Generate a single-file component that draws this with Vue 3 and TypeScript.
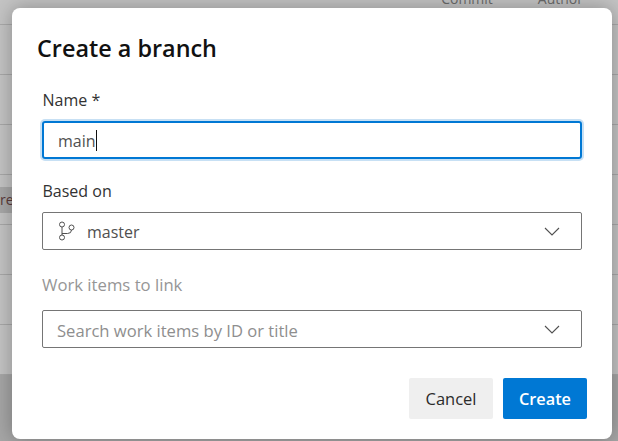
<script setup lang="ts">
const rows: number[] = [0, 1, 2, 3, 4, 5, 6];
</script>

<template>
  <div class="page">
    <div class="backdrop">
      <div class="head"><span>Commit</span><span>Author</span></div>
      <div v-for="r in rows" :key="r" class="row">
        <span v-if="r === 3" class="tag">re</span>
      </div>
    </div>
    <div class="dialog">
      <h1 class="title">Create a branch</h1>
      <div class="form">
        <div class="field">
          <label class="label">Name *</label>
          <div class="box focused"><span class="value">main</span><span class="caret"></span></div>
        </div>
        <div class="field">
          <label class="label">Based on</label>
          <div class="box">
            <svg class="branch" width="18" height="20" viewBox="0 0 18 20" fill="none" stroke="#505050" stroke-width="1">
              <circle cx="4" cy="3.5" r="2.5" />
              <circle cx="4" cy="16.5" r="2.5" />
              <circle cx="13.5" cy="6.5" r="2.5" />
              <path d="M4 6v8M4 12.5h5.5q4 0 4-3.5" />
            </svg>
            <span class="value">master</span>
            <svg class="chev" width="16" height="9" viewBox="0 0 16 9" fill="none" stroke="#505050" stroke-width="1.1"><path d="M1 1l7 7 7-7" /></svg>
          </div>
        </div>
        <div class="field links">
          <label class="label muted">Work items to link</label>
          <div class="box">
            <span class="value placeholder">Search work items by ID or title</span>
            <svg class="chev" width="16" height="9" viewBox="0 0 16 9" fill="none" stroke="#505050" stroke-width="1.1"><path d="M1 1l7 7 7-7" /></svg>
          </div>
        </div>
      </div>
      <div class="actions">
        <button class="btn cancel">Cancel</button>
        <button class="btn create">Create</button>
      </div>
    </div>
  </div>
</template>

<style>
html, body { margin: 0; padding: 0; overflow: hidden; }
</style>

<style scoped>
.page {
  position: relative;
  width: 618px;
  height: 441px;
  overflow: hidden;
  font-family: "Open Sans", "Noto Sans", sans-serif;
  background: #a6a6a6;
}
.backdrop {
  height: 375px;
  background: #c4c4c4;
}
.head {
  height: 25px;
  display: flex;
  justify-content: flex-end;
  gap: 45px;
  padding-right: 35px;
  font-size: 14px;
  line-height: 8px;
  color: #6b6b6b;
  box-sizing: border-box;
  border-bottom: 1px solid #aaa;
  overflow: hidden;
}
.head span { margin-top: -5px; }
.row {
  height: 50px;
  box-sizing: border-box;
  border-bottom: 1px solid #a8a8a8;
  display: flex;
  align-items: center;
}
.tag {
  font-size: 14px;
  color: #5a3a3a;
  background: #a8a8a8;
  width: 12px;
  height: 26px;
  line-height: 26px;
  overflow: hidden;
}
.dialog {
  position: absolute;
  left: 12px;
  top: 8px;
  width: 600px;
  height: 431px;
  box-sizing: border-box;
  background: #fff;
  border-radius: 8px;
  box-shadow: 0 0 20px rgba(0, 0, 0, 0.3);
  padding: 24px 25px 20px 25px;
  display: flex;
  flex-direction: column;
}
.title {
  margin: 0;
  font-size: 23.4px;
  line-height: 32px;
  font-weight: 600;
  color: #111;
}
.form {
  margin-top: 26px;
  padding: 0 5px;
  display: flex;
  flex-direction: column;
  gap: 22px;
  flex: 1;
}
.field { display: flex; flex-direction: column; gap: 11px; }
.links { gap: 15px; margin-top: 3px; }
.label {
  font-size: 16px;
  line-height: 20px;
  padding-left: 0.5px;
  color: #323232;
}
.muted { color: #969696; font-size: 16.7px; padding-left: 0; }
.box {
  height: 38px;
  box-sizing: border-box;
  border: 1px solid #757575;
  border-radius: 2px;
  display: flex;
  align-items: center;
  padding: 0 21px 0 14px;
  font-size: 16px;
  color: #505050;
}
.focused {
  border: 2px solid #0078d4;
  border-radius: 3px;
  box-shadow: 0 0 0 2px #c7e0f4;
  padding-left: 14px;
}
.caret { width: 1px; height: 21px; background: #111; }
.value { line-height: 20px; padding-top: 2px; }
.placeholder { color: #8e8e8e; font-size: 16.6px; padding-top: 3px; }
.branch { margin: 0 11px 0 1px; }
.chev { margin-left: auto; }
.actions { display: flex; justify-content: flex-end; gap: 10px; }
.btn {
  width: 84px;
  height: 41px;
  border: none;
  border-radius: 2px;
  font-family: inherit;
  font-size: 16.5px;
  font-weight: 500;
  padding: 0;
}
.cancel { background: #efefef; color: #2b2b2b; }
.create { background: #0078d4; color: #fff; font-weight: 600; font-size: 16.3px; }
</style>
